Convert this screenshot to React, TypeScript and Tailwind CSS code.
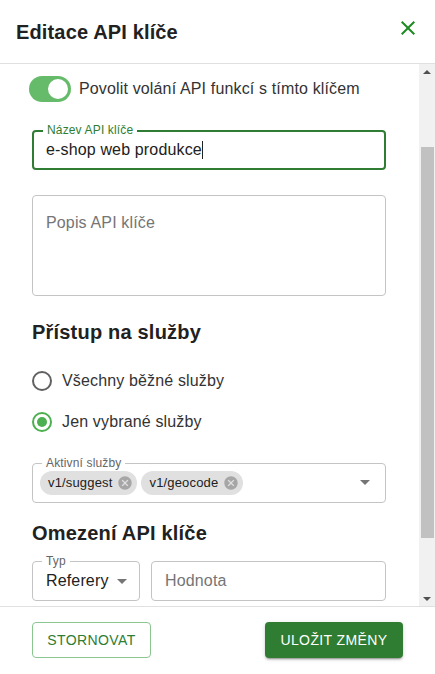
import React from "react";

const font = { fontFamily: '"Liberation Sans", Arial, sans-serif' };

function Chip({ label }: { label: string }) {
  return (
    <div className="flex h-[24px] items-center rounded-full bg-[#e0e0e0] pl-[8px] pr-[4px]">
      <span className="text-[13px] leading-none tracking-[0.16px] text-[#212121]">{label}</span>
      <svg viewBox="0 0 24 24" className="ml-[5px] h-[16px] w-[16px]" fill="#a6a6a6">
        <path d="M12 2C6.47 2 2 6.47 2 12s4.47 10 10 10 10-4.47 10-10S17.53 2 12 2zm5 13.59L15.59 17 12 13.41 8.41 17 7 15.59 10.59 12 7 8.41 8.41 7 12 10.59 15.59 7 17 8.41 13.41 12 17 15.59z" />
      </svg>
    </div>
  );
}

function Arrow({ className = "" }: { className?: string }) {
  return (
    <svg viewBox="0 0 24 24" className={`h-[24px] w-[24px] ${className}`} fill="#757575">
      <path d="M7 10l5 5 5-5z" />
    </svg>
  );
}

export default function App() {
  return (
    <div className="flex h-[674px] w-[435px] flex-col bg-white text-[#212121]" style={font}>
      {/* Header */}
      <div className="flex h-[64px] shrink-0 items-center justify-between border-b border-[#e0e0e0] pl-[16px] pr-[15px]">
        <h2 className="text-[20px] font-bold leading-[24px] tracking-[0.15px] text-[#212121]">Editace API klíče</h2>
        <svg viewBox="0 0 24 24" className="mt-[-8px] h-[24px] w-[24px]" fill="#1f8a24">
          <path d="M19 6.41L17.59 5 12 10.59 6.41 5 5 6.41 10.59 12 5 17.59 6.41 19 12 13.41 17.59 19 19 17.59 13.41 12z" />
        </svg>
      </div>

      {/* Content */}
      <div className="flex min-h-0 flex-1 overflow-hidden">
        <div className="min-w-0 flex-1 overflow-hidden pl-[32px] pr-[33px] pt-[12px]">
          {/* Switch */}
          <div className="flex h-[26px] items-center">
            <div className="relative ml-[-3px] h-[26px] w-[42px] rounded-full bg-[#66bb6a]">
              <div className="absolute right-[1px] top-[1px] h-[24px] w-[24px] rounded-full border-[2px] border-[#66bb6a] bg-white" />
            </div>
            <span className="ml-[8px] text-[16px] leading-[20px] tracking-[0.15px] text-[#333]">
              Povolit volání API funkcí s tímto klíčem
            </span>
          </div>

          {/* Name field */}
          <div className="relative mt-[28px] flex h-[40px] items-center rounded-[4px] border-[2px] border-[#2e7d32] px-[12px]">
            <span className="absolute left-[9px] top-[-9px] bg-white px-[4px] text-[12px] leading-[14px] tracking-[0.15px] text-[#2e7d32]">
              Název API klíče
            </span>
            <span className="text-[16px] leading-[20px] tracking-[0.15px] text-[#212121]">e-shop web produkce</span>
            <span className="h-[18px] w-[1px] bg-[#212121]" />
          </div>

          {/* Description */}
          <div className="mt-[25px] h-[101px] rounded-[4px] border border-[#c4c4c4] px-[13px] pt-[15px]">
            <span className="text-[16px] leading-[20px] tracking-[0.15px] text-[#757575]">Popis API klíče</span>
          </div>

          <h3 className="mt-[24px] text-[20px] font-bold leading-[24px] tracking-[0.2px] text-[#212121]">Přístup na služby</h3>

          <div className="mt-[17px] flex h-[40px] items-center">
            <div className="h-[20px] w-[20px] rounded-full border-[2px] border-[#616161]" />
            <span className="ml-[10px] text-[16px] leading-[20px] tracking-[0.15px] text-[#333]">Všechny běžné služby</span>
          </div>
          <div className="flex h-[41px] items-center">
            <div className="flex h-[20px] w-[20px] items-center justify-center rounded-full border-[2px] border-[#4caf50]">
              <div className="h-[10px] w-[10px] rounded-full bg-[#4caf50]" />
            </div>
            <span className="ml-[10px] text-[16px] leading-[20px] tracking-[0.15px] text-[#333]">Jen vybrané služby</span>
          </div>

          {/* Autocomplete */}
          <div className="relative mt-[21px] flex h-[40px] items-center rounded-[4px] border border-[#c4c4c4] pl-[7px] pr-[8px]">
            <span className="absolute left-[9px] top-[-8px] bg-white px-[4px] text-[12px] leading-[14px] tracking-[0.15px] text-[#666]">
              Aktivní služby
            </span>
            <div className="mt-[-1px] flex gap-[4px]">
              <Chip label="v1/suggest" />
              <Chip label="v1/geocode" />
            </div>
            <div className="flex-1" />
            <Arrow className="mt-[-2px]" />
          </div>

          <h3 className="mt-[18px] text-[20px] font-bold leading-[24px] tracking-[0.2px] text-[#212121]">Omezení API klíče</h3>

          <div className="mt-[16px] flex gap-[11px]">
            <div className="relative flex h-[40px] w-[108px] items-center rounded-[4px] border border-[#c4c4c4] pl-[13px]">
              <span className="absolute left-[9px] top-[-8px] bg-white px-[4px] text-[12px] leading-[14px] tracking-[0.15px] text-[#666]">
                Typ
              </span>
              <span className="text-[16px] leading-[20px] tracking-[0.15px] text-[#212121]">Referery</span>
              <Arrow className="ml-[1px]" />
            </div>
            <div className="flex h-[40px] flex-1 items-center rounded-[4px] border border-[#c4c4c4] pl-[13px]">
              <span className="text-[16px] leading-[20px] tracking-[0.15px] text-[#757575]">Hodnota</span>
            </div>
          </div>
          <div className="h-[120px]" />
        </div>

        {/* Scrollbar */}
        <div className="flex w-[16px] shrink-0 flex-col bg-[#f1f1f1]">
          <div className="flex h-[15px] items-center justify-center">
            <div className="h-0 w-0 border-x-[4px] border-b-[4px] border-x-transparent border-b-[#505050]" />
          </div>
          <div className="h-[68px]" />
          <div className="ml-[2px] mr-[1px] h-[391px] bg-[#c1c1c1]" />
          <div className="flex-1" />
          <div className="flex h-[15px] items-center justify-center">
            <div className="h-0 w-0 border-x-[4px] border-t-[4px] border-x-transparent border-t-[#505050]" />
          </div>
        </div>
      </div>

      {/* Footer */}
      <div className="flex h-[68px] shrink-0 items-center justify-between border-t border-[#e0e0e0] px-[32px] pb-[1px]">
        <button className="h-[36px] w-[119px] rounded-[4px] border border-[#8cc68f] text-[14px] font-medium uppercase tracking-[0.4px] text-[#2e7d32]">
          Stornovat
        </button>
        <button className="h-[36px] w-[138px] rounded-[4px] bg-[#2e7d32] text-[14px] font-medium uppercase tracking-[0.4px] text-white shadow-[0_3px_1px_-2px_rgba(0,0,0,0.2),0_2px_2px_0_rgba(0,0,0,0.14),0_1px_5px_0_rgba(0,0,0,0.12)]">
          Uložit změny
        </button>
      </div>
    </div>
  );
}
